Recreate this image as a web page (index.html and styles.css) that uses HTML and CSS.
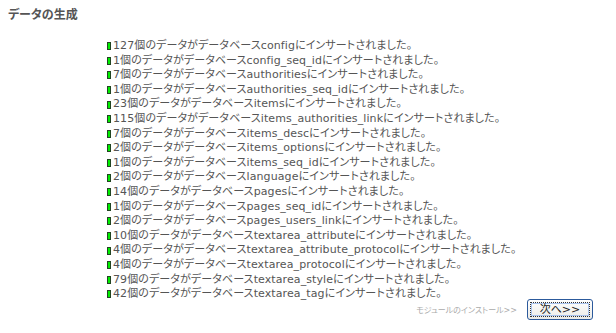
FILE: index.html
```html
<!DOCTYPE html>
<html lang="ja">
<head>
    <meta charset="UTF-8">
    <title>データの生成</title>
    <link rel="stylesheet" href="styles.css">
</head>
<body>
    <h2 class="title">データの生成</h2>
    <ul class="result">
        <li><span class="ok"></span>127個のデータがデータベースconfigにインサートされました。</li>
        <li><span class="ok"></span>1個のデータがデータベースconfig_seq_idにインサートされました。</li>
        <li><span class="ok"></span>7個のデータがデータベースauthoritiesにインサートされました。</li>
        <li><span class="ok"></span>1個のデータがデータベースauthorities_seq_idにインサートされました。</li>
        <li><span class="ok"></span>23個のデータがデータベースitemsにインサートされました。</li>
        <li><span class="ok"></span>115個のデータがデータベースitems_authorities_linkにインサートされました。</li>
        <li><span class="ok"></span>7個のデータがデータベースitems_descにインサートされました。</li>
        <li><span class="ok"></span>2個のデータがデータベースitems_optionsにインサートされました。</li>
        <li><span class="ok"></span>1個のデータがデータベースitems_seq_idにインサートされました。</li>
        <li><span class="ok"></span>2個のデータがデータベースlanguageにインサートされました。</li>
        <li><span class="ok"></span>14個のデータがデータベースpagesにインサートされました。</li>
        <li><span class="ok"></span>1個のデータがデータベースpages_seq_idにインサートされました。</li>
        <li><span class="ok"></span>2個のデータがデータベースpages_users_linkにインサートされました。</li>
        <li><span class="ok"></span>10個のデータがデータベースtextarea_attributeにインサートされました。</li>
        <li><span class="ok"></span>4個のデータがデータベースtextarea_attribute_protocolにインサートされました。</li>
        <li><span class="ok"></span>4個のデータがデータベースtextarea_protocolにインサートされました。</li>
        <li><span class="ok"></span>79個のデータがデータベースtextarea_styleにインサートされました。</li>
        <li><span class="ok"></span>42個のデータがデータベースtextarea_tagにインサートされました。</li>
    </ul>
    <div class="nav">
        <span class="next-label">モジュールのインストール&gt;&gt;</span>
        <button class="next-btn"><span>次へ&gt;&gt;</span></button>
    </div>
</body>
</html>
```

FILE: styles.css
```css
body {
    margin: 0;
    background-color: #fff;
    color: #555;
    font-family: "DejaVu Sans", "Noto Sans CJK JP", sans-serif;
    font-size: 11px;
    font-feature-settings: "palt";
}
.title { margin: 0; padding: 7px 8px 0; font-size: 12px; font-weight: bold; color: #555; line-height: 16px; }
.result { list-style: none; margin: 16px 0 0 107px; padding: 0; }
.result li { display: flex; align-items: center; line-height: 14.6px; white-space: nowrap; letter-spacing: 0.1px; }
.ok { width: 2px; height: 6px; background-color: #00ee00; border: 1px solid #224422; margin-right: 2px; flex-shrink: 0; }
.nav { display: flex; justify-content: flex-end; align-items: center; gap: 10px; padding: 0 23px 0 0; margin-top: -3px; }
.next-label { color: #aaa; font-size: 8px; }
.next-btn { width: 66px; height: 21px; padding: 2px; border: 1px solid #2c5a9c; border-radius: 3px; background: linear-gradient(#ffffff, #ecebe6); font: inherit; font-size: 11px; color: #222; }
.next-btn span { display: block; height: 100%; border: 1px dotted #333; box-sizing: border-box; box-shadow: inset 0 0 0 1px #aac4ee; line-height: 13px; }
```
